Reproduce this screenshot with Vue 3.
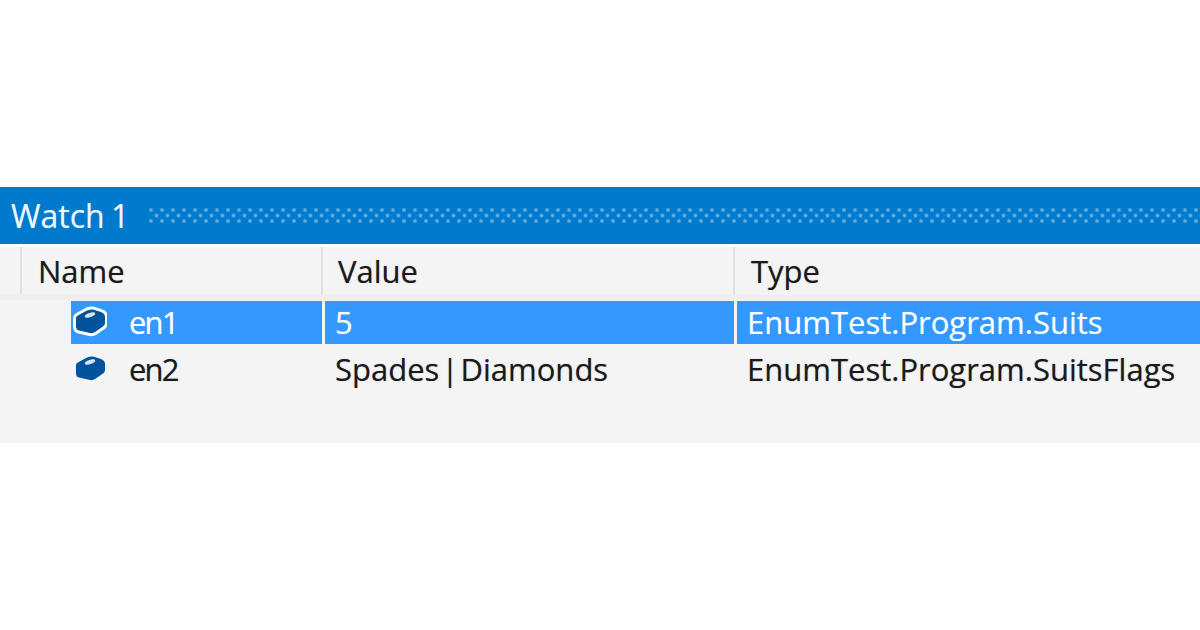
<template>
  <div class="page">
    <div class="watch">
      <div class="title-bar">
        <span class="title">Watch 1</span>
        <div class="grip"></div>
      </div>
      <div class="head">
        <div class="gutter"></div>
        <div class="head-cell name-col">Name</div>
        <div class="head-cell value-col">Value</div>
        <div class="head-cell type-col">Type</div>
      </div>
      <div
        v-for="row in rows"
        :key="row.name"
        class="row"
        :class="{ selected: row.selected }"
      >
        <div class="cell name-cell">
          <svg class="icon" viewBox="0 0 36 32" width="36" height="32">
            <path
              d="M6 10 L15 5 Q18 3 22 3.500 L30 6 Q34 7.500 34 11 L34 17 Q34 19 32 20.500 L24 26 Q22 27.500 19 27 L8 24.500 Q5 24 5 20 L5 12 Q5 11 6 10 Z"
              :fill="row.selected ? '#fff' : 'none'"
              :stroke="row.selected ? '#fff' : 'none'"
              stroke-width="6"
              stroke-linejoin="round"
            />
            <path
              d="M6 10 L15 5 Q18 3 22 3.500 L30 6 Q34 7.500 34 11 L34 17 Q34 19 32 20.500 L24 26 Q22 27.500 19 27 L8 24.500 Q5 24 5 20 L5 12 Q5 11 6 10 Z"
              fill="#00539c"
            />
            <ellipse cx="19" cy="9" rx="5.500" ry="2.200" transform="rotate(-18 19 9)" fill="#d4e4f2" />
          </svg>
          <span class="var-name">{{ row.name }}</span>
        </div>
        <div class="cell value-cell">{{ row.value }}</div>
        <div class="cell type-cell">{{ row.type }}</div>
      </div>
    </div>
  </div>
</template>

<script setup>
const rows = [
  { name: 'en1', value: '5', type: 'EnumTest.Program.Suits', selected: true },
  { name: 'en2', value: 'Spades | Diamonds', type: 'EnumTest.Program.SuitsFlags', selected: false },
]
</script>

<style>
html,
body {
  margin: 0;
  background: #fff;
}
</style>

<style scoped>
.page {
  width: 1200px;
  height: 630px;
  padding-top: 187px;
  box-sizing: border-box;
  overflow: hidden;
  background: #fff;
  font-family: "Open Sans", "Noto Sans", Arial, sans-serif;
  font-size: 31px;
  word-spacing: -6px;
  color: #1a1a1a;
  text-shadow: 0 0 1px rgba(30, 30, 30, 0.45);
}

.watch {
  height: 256px;
  background: #f4f4f4;
}

.title-bar {
  display: flex;
  align-items: center;
  height: 57px;
  padding-left: 11px;
  background: #007acc;
}

.title {
  flex: none;
  width: 116px;
  color: #eef7fd;
  font-size: 32px;
  word-spacing: -2px;
  white-space: nowrap;
  text-shadow: 0 0 1px rgba(255, 255, 255, 0.4);
}

.grip {
  flex: 1;
  height: 17px;
  margin-left: 21px;
  background-image:
    radial-gradient(circle at 3px 3px, #62abde 0, #62abde 1.200px, transparent 2.500px),
    radial-gradient(circle at 8.500px 8.500px, #62abde 0, #62abde 1.200px, transparent 2.500px);
  background-size: 11px 11px;
}

.head {
  display: grid;
  grid-template-columns: 22px 301px 412px 1fr;
  height: 48px;
  margin-bottom: 1px;
  border-top: 3px solid #fff;
  border-bottom: 5px solid #efefef;
}

.gutter {
  border-right: 2px solid #e2e2e4;
}

.head-cell {
  display: flex;
  align-items: center;
  border-right: 2px solid #e2e2e4;
  box-sizing: border-box;
  padding-left: 15px;
}

.type-col {
  border-right: none;
  padding-left: 16px;
}

.name-col {
  padding-left: 16px;
}

.row {
  display: grid;
  grid-template-columns: 323px 412px 1fr;
  height: 44px;
  margin-bottom: 2px;
}

.row.selected {
  height: 43px;
  margin-bottom: 3px;
}

.cell {
  display: flex;
  align-items: center;
  box-sizing: border-box;
  padding-left: 12px;
  padding-bottom: 1px;
  white-space: nowrap;
}

.name-cell {
  padding-left: 71px;
}

.var-name {
  margin-left: 22px;
  letter-spacing: -1.800px;
}

.row.selected .cell {
  color: #fff;
  text-shadow: 0 0 1px rgba(255, 255, 255, 0.4);
}

.row.selected .name-cell {
  background: linear-gradient(#3399ff, #3399ff) 71px 0 / 251px 100% no-repeat;
}

.row.selected .value-cell {
  background: linear-gradient(#3399ff, #3399ff) 2px 0 / 409px 100% no-repeat;
}

.row.selected .type-cell {
  background: linear-gradient(#3399ff, #3399ff) 2px 0 / 100% 100% no-repeat;
}

.icon {
  flex: none;
  filter: blur(0.5px);
}
</style>
